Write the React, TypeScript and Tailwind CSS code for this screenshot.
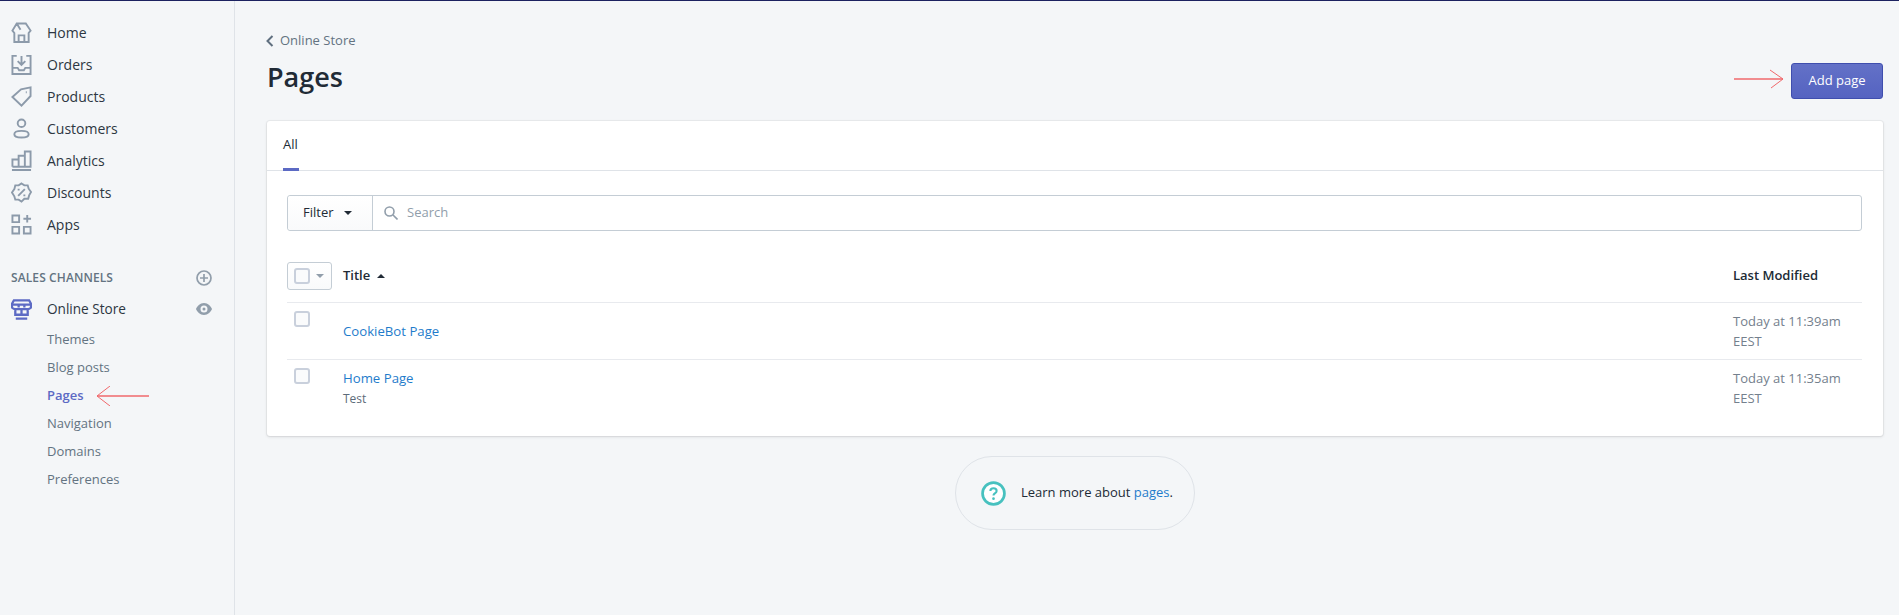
import React from "react";

const S = "none";
const navIcons: Record<string, React.ReactNode> = {
  Home: <path d="M6 1.500 1.500 9l2 2.500V21h15v-9.500l2-2.500L15.500 1.500zM6 1.500 10 8M8 21v-7h6v7" />,
  Orders: <path d="M6 2H1.500v19h19V2H16M11 2v9.500M7 7.500l4 4 4-4M1.500 14.500H7l1.500 2.500h5l1.500-2.500h5.500" />,
  Products: <path d="M1.500 11.500 10.500 3.500l10-2v9L11 20.500zM15.500 6.500h1" />,
  Customers: <path d="M11 9.500a4 4 0 1 0 0-8 4 4 0 0 0 0 8zM3.500 17c0-2 3-3.500 7.500-3.500s7.500 1.500 7.500 3.500-3 3.500-7.500 3.500-7.500-1.500-7.500-3.500z" />,
  Analytics: <path d="M1 21h20M1.500 17.500V10H8M8 17.500V6h6.500M14.500 17.500V1.500h6v16h-19" />,
  Discounts: <path d="M11 1.500 14 3.500h3.500l1 3.500 2.500 3.500-2 3.500-1 3.500H14L11 20.500 8 18.500H4.500l-1-3.500L1 11l2.500-3.500 1-4H8zM7.500 14.500l7-7M7 8h2M13 14h2" />,
  Apps: <path d="M1.500 1.500h7v7h-7zM1.500 13.500h7v7h-7zM13.500 13.500h7v7h-7zM17 1v8M13 5h8" />,
};

function NavItem({ label }: { label: string }) {
  return (
    <div className="flex h-8 items-center pl-[11px]">
      <svg viewBox="0 0 22 22" className="h-[21px] w-[21px] shrink-0 text-[#8c9aaa]" fill={S} stroke="currentColor" strokeWidth="2">
        {navIcons[label]}
      </svg>
      <span className="ml-[15px] text-[14px] text-[#2d3742]">{label}</span>
    </div>
  );
}

function Check() {
  return <span className="block h-4 w-4 rounded-[3px] border-2 border-[#c9d0dc] bg-[#fafbfc]" />;
}

function Arrow({ width, dir }: { width: number; dir: "l" | "r" }) {
  const d = dir === "r" ? `M${width - 14} 1 ${width - 1} 10 ${width - 13} 19` : `M14 0 1 10 14 20`;
  return (
    <svg width={width} height="20" viewBox={`0 0 ${width} 20`} fill="none" stroke="#f0686c" strokeWidth="1">
      <path d={d} />
      <path d={`M${dir === "r" ? 0 : 1} 10H${dir === "r" ? width - 1 : width}`} strokeWidth="1.500" />
    </svg>
  );
}

function Row({ title, sub, time }: { title: string; sub?: string; time: string }) {
  return (
    <div className="flex h-[57px] border-t border-[#e8eaee] pt-[8px] text-[13px] leading-[20px]">
      <div className="w-[56px] pl-[7px]"><Check /></div>
      <div className="flex-1">
        {sub ? (
          <>
            <a className="block text-[13.2px] text-[#1f7ccb]">{title}</a>
            <div className="mt-px text-[12px] text-[#5d6b7a]">{sub}</div>
          </>
        ) : (
          <a className="mt-[10px] block text-[13.2px] text-[#1f7ccb]">{title}</a>
        )}
      </div>
      <div className="w-[129px] text-[#74808d]">
        <div>{time}</div>
        <div>EEST</div>
      </div>
    </div>
  );
}

export default function App() {
  return (
    <div className="flex h-[615px] w-full flex-col overflow-hidden bg-[#f4f6f8] font-['Open_Sans','Noto_Sans',sans-serif]">
      <div className="h-px shrink-0 bg-[#1c2260]" />
      <div className="flex min-h-0 flex-1">
        <aside className="w-[235px] shrink-0 border-r border-[#dfe3e8] pt-[15px]">
          {Object.keys(navIcons).map((l) => <NavItem key={l} label={l} />)}
          <div className="mt-[26px] flex h-6 items-center justify-between pl-[11px] pr-[22px]">
            <span className="text-[12px] font-semibold tracking-[0.1px] text-[#637381]">SALES CHANNELS</span>
            <svg viewBox="0 0 16 16" className="h-4 w-4 text-[#919eab]" fill="none" stroke="currentColor" strokeWidth="1.700">
              <circle cx="8" cy="8" r="7" /><path d="M8 4v8M4 8h8" />
            </svg>
          </div>
          <div className="mt-[3px] flex h-8 items-center justify-between pl-[11px] pr-[22px]">
            <div className="flex items-center">
              <svg viewBox="0 0 22 22" className="h-[21px] w-[21px] text-[#5c6ac4]" fill="none" stroke="currentColor" strokeWidth="2.400">
                <path d="M3 1.500h16l2 3.500v3c0 1.500-2 2.500-3.500 2.500h-13C3 10.500 1 9.500 1 8V5zM1 6h20M4.500 11v5.500h13V11M11 11v5.500M5 20.500h12M8 5v4M14 5v4" />
              </svg>
              <span className="ml-[15px] text-[13.6px] text-[#2d3742]">Online Store</span>
            </div>
            <svg viewBox="0 0 16 12" className="h-3 w-4 text-[#919eab]" fill="currentColor">
              <path fillRule="evenodd" d="M8 0c4 0 7 3.500 8 6-1 2.500-4 6-8 6S1 8.500 0 6c1-2.500 4-6 8-6zm0 2.500a3.500 3.500 0 1 0 0 7 3.500 3.500 0 0 0 0-7zM8 4.500a1.500 1.500 0 1 1 0 3 1.500 1.500 0 0 1 0-3z" />
            </svg>
          </div>
          <div className="mt-[1px] pl-[47px] text-[13px] text-[#637381]">
            <div className="flex h-7 items-center">Themes</div>
            <div className="flex h-7 items-center">Blog posts</div>
            <div className="relative flex h-7 items-center font-semibold text-[#5c6ac4]">
              Pages
              <span className="absolute left-[49px] top-[4px]"><Arrow width={53} dir="l" /></span>
            </div>
            <div className="flex h-7 items-center">Navigation</div>
            <div className="flex h-7 items-center">Domains</div>
            <div className="flex h-7 items-center">Preferences</div>
          </div>
        </aside>
        <main className="min-w-0 flex-1 pl-[32px] pr-4 pt-[30px]">
          <div className="flex h-[90px] items-start justify-between">
            <div>
              <div className="-ml-px flex h-5 items-center text-[13px] text-[#637381]">
                <svg viewBox="0 0 8 12" className="mr-[6px] h-[12px] w-2" fill="none" stroke="#5f6f7f" strokeWidth="2"><path d="M6.500 1 1.500 6l5 5" /></svg>
                Online Store
              </div>
              <h1 className="mt-[8px] text-[27px] font-semibold leading-[36px] text-[#212b36]">Pages</h1>
            </div>
            <div className="relative mt-[32px]">
              <span className="absolute -left-[57px] top-[6px]"><Arrow width={50} dir="r" /></span>
              <button className="h-[36px] w-[92px] rounded-[3px] border border-[#3f4eae] bg-gradient-to-b from-[#6371c7] to-[#5563c1] text-[13px] text-white">Add page</button>
            </div>
          </div>
          <section className="h-[315px] rounded-[3px] bg-white shadow-[0_0_0_1px_rgba(63,63,68,0.05),0_1px_3px_0_rgba(63,63,68,0.15)]">
            <div className="h-[50px] border-b border-[#dfe3e8] pl-[16px]">
              <div className="flex h-[50px] w-4 items-center border-b-[3px] border-[#5c6ac4] pt-[1px] text-[13px] text-[#212b36]">All</div>
            </div>
            <div className="pl-[20px] pr-[21px] pt-[24px]">
              <div className="flex h-[36px] rounded-[3px] border border-[#c4cdd5]">
                <div className="flex w-[85px] items-center gap-[10px] rounded-l-[3px] border-r border-[#c4cdd5] bg-gradient-to-b from-white to-[#f9fafb] pl-[15px] text-[13px] text-[#212b36]">
                  Filter
                  <span className="h-0 w-0 border-x-[4px] border-t-[4px] border-x-transparent border-t-[#212b36]" />
                </div>
                <div className="flex flex-1 items-center pl-[11px] text-[13px] text-[#919eab]">
                  <svg viewBox="0 0 14 14" className="mr-[9px] h-[14px] w-[14px]" fill="none" stroke="#919eab" strokeWidth="1.600">
                    <circle cx="5.500" cy="5.500" r="4.500" /><path d="m9 9 4.500 4.500" />
                  </svg>
                  Search
                </div>
              </div>
              <div className="mt-[31px] flex h-[40px] text-[13px] font-semibold text-[#212b36]">
                <div className="flex h-[28px] w-[45px] items-center gap-[6px] rounded-[3px] border border-[#c4cdd5] bg-gradient-to-b from-white to-[#f9fafb] pl-[6px]">
                  <Check />
                  <span className="h-0 w-0 border-x-[4px] border-t-[4px] border-x-transparent border-t-[#919eab]" />
                </div>
                <div className="ml-[11px] flex h-[28px] flex-1 items-center gap-[7px]">
                  Title
                  <span className="h-0 w-0 border-x-[4px] border-b-[4px] border-x-transparent border-b-[#212b36]" />
                </div>
                <div className="flex h-[28px] w-[129px] items-center">Last Modified</div>
              </div>
              <Row title="CookieBot Page" time="Today at 11:39am" />
              <Row title="Home Page" sub="Test" time="Today at 11:35am" />
            </div>
          </section>
          <div className="mt-5 flex justify-center">
            <div className="flex h-[74px] w-[240px] items-center rounded-full border border-[#dfe3e8] pl-[25px] text-[13px] text-[#212b36]">
              <svg viewBox="0 0 24 24" className="mr-[15px] h-[25px] w-[25px]" fill="none">
                <circle cx="12" cy="12" r="10.500" fill="white" stroke="#47c1bf" strokeWidth="2.600" />
                <path d="M9 9.500C9 7.800 10.300 7 12 7s3 1 3 2.500-1 2-2 2.700c-.7.500-1 .8-1 1.800" stroke="#47c1bf" strokeWidth="2" />
                <circle cx="12" cy="17" r="1.300" fill="#47c1bf" />
              </svg>
              <span>Learn more about <a className="text-[#1f7ccb]">pages</a>.</span>
            </div>
          </div>
        </main>
      </div>
    </div>
  );
}
